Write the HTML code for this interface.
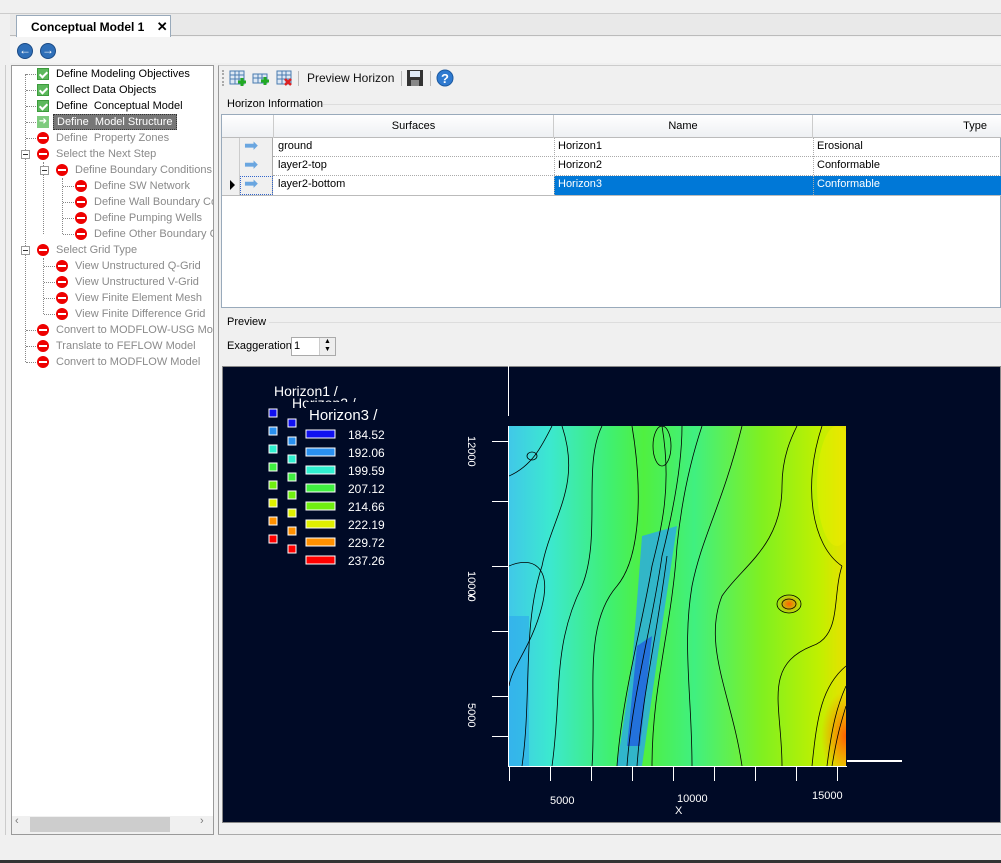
<!DOCTYPE html>
<html><head><style>
*{margin:0;padding:0;box-sizing:border-box}
body{width:1001px;height:863px;background:#f0f0f0;font-family:"Liberation Sans",sans-serif;font-size:11px;position:relative;overflow:hidden;color:#000}
.a{position:absolute}
.ti{position:absolute;height:16px;line-height:16px;white-space:nowrap}
.ck{position:absolute;width:12px;height:12px;background:#5cb85c;border:1px solid #3c9b3c}
.ck:after{content:"";position:absolute;left:3px;top:1px;width:3px;height:6px;border:solid #fff;border-width:0 2px 2px 0;transform:rotate(45deg)}
.st{position:absolute;width:12px;height:12px;border-radius:50%;background:#e00}
.st:after{content:"";position:absolute;left:2px;top:5px;width:8px;height:2px;background:#fff}
.g{color:#8a8a8a}
.dh{position:absolute;border-top:1px dotted #888;height:0}
.dv{position:absolute;border-left:1px dotted #888;width:0}
.pm{position:absolute;width:9px;height:9px;border:1px solid #999;background:#fff}
.pm:after{content:"";position:absolute;left:1px;top:3px;width:5px;height:1px;background:#333}
</style></head><body>
<div class="a" style="left:0;top:0;width:1001px;height:14px;background:#f0f0f0;border-bottom:1px solid #ccc"></div>
<div class="a" style="left:10px;top:14px;width:991px;height:22px;background:#e9e9e9;border-bottom:1px solid #bbb"></div>
<div class="a" style="left:16px;top:15px;width:155px;height:22px;background:#fff;border:1px solid #9ab;border-bottom:none;font-weight:bold;font-size:12px;line-height:21px;padding-left:14px">Conceptual Model 1 <span style="margin-left:9px;font-size:13px">✕</span></div>
<div class="a" style="left:10px;top:37px;width:991px;height:26px;background:#f4f4f4"></div>
<div class="a" style="left:17px;top:43px;width:16px;height:16px;border-radius:50%;background:#2f6fb8;border:1px solid #1a4a85;color:#fff;font-size:12px;line-height:13px;text-align:center;font-weight:bold">←</div>
<div class="a" style="left:40px;top:43px;width:16px;height:16px;border-radius:50%;background:#2f6fb8;border:1px solid #1a4a85;color:#fff;font-size:12px;line-height:13px;text-align:center;font-weight:bold">→</div>
<div class="a" style="left:11px;top:65px;width:203px;height:770px;background:#fff;border:1px solid #999;overflow:hidden">
<div class="dv" style="left:13px;top:8px;height:288px"></div>
<div class="dv" style="left:31px;top:96px;height:72px"></div>
<div class="dv" style="left:50px;top:112px;height:56px"></div>
<div class="dv" style="left:31px;top:192px;height:56px"></div>
<div class="ck" style="left:25px;top:2px"></div><div class="dh" style="left:14px;top:8px;width:10px"></div><div class="ti" style="left:44px;top:0px">Define Modeling Objectives</div>
<div class="ck" style="left:25px;top:18px"></div><div class="dh" style="left:14px;top:24px;width:10px"></div><div class="ti" style="left:44px;top:16px">Collect Data Objects</div>
<div class="ck" style="left:25px;top:34px"></div><div class="dh" style="left:14px;top:40px;width:10px"></div><div class="ti" style="left:44px;top:32px">Define&nbsp; Conceptual Model</div>
<div class="a" style="left:25px;top:50px;width:12px;height:12px;background:#7ecb7e;color:#fff;font-size:10px;line-height:12px;text-align:center">➜</div><div class="dh" style="left:14px;top:56px;width:10px"></div><div class="ti" style="left:41px;top:48px;background:#777;color:#fff;padding:0 3px;border:1px dotted #333;line-height:14px">Define&nbsp; Model Structure</div>
<div class="st" style="left:25px;top:66px"></div><div class="dh" style="left:14px;top:72px;width:10px"></div><div class="ti g" style="left:44px;top:64px">Define&nbsp; Property Zones</div>
<div class="pm" style="left:9px;top:84px"></div><div class="st" style="left:25px;top:82px"></div><div class="ti g" style="left:44px;top:80px">Select the Next Step</div>
<div class="pm" style="left:28px;top:100px"></div><div class="st" style="left:44px;top:98px"></div><div class="ti g" style="left:63px;top:96px">Define Boundary Conditions</div>
<div class="st" style="left:63px;top:114px"></div><div class="dh" style="left:51px;top:120px;width:11px"></div><div class="ti g" style="left:82px;top:112px">Define SW Network</div>
<div class="st" style="left:63px;top:130px"></div><div class="dh" style="left:51px;top:136px;width:11px"></div><div class="ti g" style="left:82px;top:128px">Define Wall Boundary Co</div>
<div class="st" style="left:63px;top:146px"></div><div class="dh" style="left:51px;top:152px;width:11px"></div><div class="ti g" style="left:82px;top:144px">Define Pumping Wells</div>
<div class="st" style="left:63px;top:162px"></div><div class="dh" style="left:51px;top:168px;width:11px"></div><div class="ti g" style="left:82px;top:160px">Define Other Boundary C</div>
<div class="pm" style="left:9px;top:180px"></div><div class="st" style="left:25px;top:178px"></div><div class="ti g" style="left:44px;top:176px">Select Grid Type</div>
<div class="st" style="left:44px;top:194px"></div><div class="dh" style="left:32px;top:200px;width:11px"></div><div class="ti g" style="left:63px;top:192px">View Unstructured Q-Grid</div>
<div class="st" style="left:44px;top:210px"></div><div class="dh" style="left:32px;top:216px;width:11px"></div><div class="ti g" style="left:63px;top:208px">View Unstructured V-Grid</div>
<div class="st" style="left:44px;top:226px"></div><div class="dh" style="left:32px;top:232px;width:11px"></div><div class="ti g" style="left:63px;top:224px">View Finite Element Mesh</div>
<div class="st" style="left:44px;top:242px"></div><div class="dh" style="left:32px;top:248px;width:11px"></div><div class="ti g" style="left:63px;top:240px">View Finite Difference Grid</div>
<div class="st" style="left:25px;top:258px"></div><div class="dh" style="left:14px;top:264px;width:10px"></div><div class="ti g" style="left:44px;top:256px">Convert to MODFLOW-USG Model</div>
<div class="st" style="left:25px;top:274px"></div><div class="dh" style="left:14px;top:280px;width:10px"></div><div class="ti g" style="left:44px;top:272px">Translate to FEFLOW Model</div>
<div class="st" style="left:25px;top:290px"></div><div class="dh" style="left:14px;top:296px;width:10px"></div><div class="ti g" style="left:44px;top:288px">Convert to MODFLOW Model</div>
</div>
<div class="a" style="left:0;top:65px;width:6px;height:770px;background:#f0f0f0;border-right:1px solid #ccc"></div>
<div class="a" style="left:12px;top:816px;width:201px;height:18px;background:#f0f0f0"></div>
<div class="a" style="left:30px;top:817px;width:140px;height:15px;background:#cdcdcd"></div>
<div class="a" style="left:15px;top:815px;color:#777">‹</div><div class="a" style="left:200px;top:815px;color:#777">›</div>
<div class="a" style="left:218px;top:65px;width:783px;height:770px;background:#f0f0f0;border-left:1px solid #999;border-top:1px solid #ccc"></div>
<div class="a" style="left:222px;top:70px;width:3px;height:16px;border-left:2px dotted #aaa"></div>
<svg class="a" style="left:229px;top:69px" width="230" height="20">
<g fill="#dde8f4" stroke="#4a7cb0"><rect x="1" y="2" width="14" height="13"/><rect x="24" y="5" width="14" height="9"/><rect x="48" y="2" width="14" height="13"/></g>
<g stroke="#4a7cb0"><path d="M1 6H15M1 10H15M6 2V15M10 2V15M24 9H38M29 5V14M33 5V14M48 6H62M48 10H62M53 2V15M57 2V15"/></g>
<path d="M13 9v8M9 13h8M36 8v8M32 12h8" stroke="#2a2" stroke-width="3"/>
<path d="M56 10l6 6M62 10l-6 6" stroke="#d22" stroke-width="2.5"/>
<rect x="69" y="2" width="1" height="15" fill="#bbb"/><rect x="172" y="2" width="1" height="15" fill="#bbb"/><rect x="201" y="2" width="1" height="15" fill="#bbb"/>
<rect x="178" y="1" width="16" height="16" fill="#333"/><rect x="181" y="2" width="10" height="6" fill="#dfe9f5"/><rect x="182" y="11" width="8" height="6" fill="#888"/>
<circle cx="216" cy="9" r="8" fill="#2f7ad0" stroke="#1c5aa0"/><text x="212" y="14" fill="#fff" font-size="13" font-weight="bold" font-family="Liberation Sans">?</text>
</svg>
<div class="a" style="left:307px;top:70px;line-height:16px;color:#111;font-size:12px">Preview Horizon</div>
<div class="a" style="left:227px;top:98px">Horizon Information</div>
<div class="a" style="left:323px;top:104px;width:678px;border-top:1px solid #ddd"></div>
<div class="a" style="left:221px;top:114px;width:780px;height:194px;background:#fff;border:1px solid #9ab"></div>
<div class="a" style="left:222px;top:115px;width:779px;height:23px;background:linear-gradient(#fff,#eef0f3);border-bottom:1px solid #bbb"></div>
<div class="a" style="left:273px;top:115px;width:281px;height:23px;line-height:23px;text-align:center;border-left:1px solid #ccc;border-right:1px solid #ccc">Surfaces</div>
<div class="a" style="left:554px;top:115px;width:259px;height:23px;line-height:23px;text-align:center;border-right:1px solid #ccc">Name</div>
<div class="a" style="left:813px;top:115px;width:188px;height:23px;line-height:23px;text-align:right;padding-right:14px">Type</div>
<div class="a" style="left:554px;top:176px;width:447px;height:19px;background:#0078d7"></div>
<div class="a" style="left:222px;top:138px;width:18px;height:57px;background:#f0f0f0;border-right:1px solid #ccc"></div>
<div class="a" style="left:230px;top:180px;width:0;height:0;border:5px solid transparent;border-left:5px solid #000;border-right:none"></div>
<div class="a" style="left:240px;top:138px;width:33px;height:57px;background:#f0f0f0;border-right:1px solid #aaa"></div>
<div class="a" style="left:240px;top:176px;width:33px;height:19px;border:1px dotted #36c"></div>
<div class="a" style="left:244px;top:136px;color:#6aa6e0;font-size:17px;line-height:19px">➡</div>
<div class="a" style="left:244px;top:155px;color:#6aa6e0;font-size:17px;line-height:19px">➡</div>
<div class="a" style="left:244px;top:174px;color:#6aa6e0;font-size:17px;line-height:19px">➡</div>
<div class="a" style="left:273px;top:156px;width:728px;border-top:1px dotted #aaa"></div>
<div class="a" style="left:273px;top:175px;width:728px;border-top:1px dotted #aaa"></div>
<div class="a" style="left:222px;top:195px;width:779px;border-top:1px solid #bbb"></div>
<div class="a" style="left:554px;top:138px;height:57px;border-left:1px dotted #aaa"></div>
<div class="a" style="left:813px;top:138px;height:57px;border-left:1px dotted #aaa"></div>
<div class="ti" style="left:278px;top:138px">ground</div><div class="ti" style="left:558px;top:138px">Horizon1</div><div class="ti" style="left:817px;top:138px">Erosional</div>
<div class="ti" style="left:278px;top:157px">layer2-top</div><div class="ti" style="left:558px;top:157px">Horizon2</div><div class="ti" style="left:817px;top:157px">Conformable</div>
<div class="ti" style="left:278px;top:176px">layer2-bottom</div><div class="ti" style="left:558px;top:176px;color:#fff">Horizon3</div><div class="ti" style="left:817px;top:176px;color:#fff">Conformable</div>
<div class="a" style="left:227px;top:316px">Preview</div>
<div class="a" style="left:269px;top:322px;width:732px;border-top:1px solid #ddd"></div>
<div class="a" style="left:227px;top:340px">Exaggeration</div>
<div class="a" style="left:291px;top:337px;width:45px;height:19px;background:#fff;border:1px solid #aaa;padding-left:2px;line-height:17px">1</div>
<div class="a" style="left:319px;top:338px;width:16px;height:17px;background:#eee;border-left:1px solid #ccc;font-size:7px;line-height:8px;text-align:center">▲<br>▼</div>
<div class="a" style="left:222px;top:366px;width:779px;height:457px;background:#000a26;border:1px solid #888"></div>
<svg class="a" style="left:222px;top:366px" width="779" height="457" font-family="Liberation Sans">
<defs>
<linearGradient id="h" x1="0" x2="1"><stop offset="0" stop-color="#40c8e8"/><stop offset=".12" stop-color="#3ce8d0"/><stop offset=".3" stop-color="#40f070"/><stop offset=".4" stop-color="#50f040"/><stop offset=".55" stop-color="#40f080"/><stop offset=".75" stop-color="#80f020"/><stop offset=".92" stop-color="#c0f000"/><stop offset="1" stop-color="#e8e000"/></linearGradient>
<radialGradient id="o"><stop offset="0" stop-color="#ff6000"/><stop offset="1" stop-color="#ff8000" stop-opacity="0"/></radialGradient>
<clipPath id="c"><rect x="287" y="60" width="337" height="340"/></clipPath>
</defs>
<g clip-path="url(#c)">
<rect x="287" y="60" width="337" height="340" fill="url(#h)"/>
<path d="M420 170 L455 160 L440 260 L420 400 L395 400 L410 300Z" fill="#2aa8e8" opacity=".8"/>
<path d="M415 280 L430 270 L418 380 L405 380Z" fill="#2060e0" opacity=".8"/>
<rect x="287" y="250" width="20" height="150" fill="#2aa0f0" opacity=".5"/>
<ellipse cx="624" cy="370" rx="25" ry="45" fill="url(#o)"/>
<ellipse cx="567" cy="238" rx="12" ry="10" fill="url(#o)"/>
<ellipse cx="615" cy="120" rx="20" ry="60" fill="#f0f000" opacity=".4"/>
<g fill="none" stroke="#000" stroke-width=".8">
<path d="M287 110 C310 100 320 80 330 60 M300 400 C310 330 300 260 320 200 C330 150 360 120 340 60"/>
<path d="M330 400 C340 330 330 280 360 220 C380 170 360 100 380 60"/>
<path d="M370 400 C375 330 360 260 395 220 C420 190 420 120 410 60"/>
<path d="M395 400 C400 330 420 260 430 200 C440 160 450 120 440 60"/>
<path d="M405 400 C410 330 430 260 440 190 C450 150 460 100 460 60"/>
<path d="M415 400 C420 330 435 270 445 190"/>
<path d="M430 400 C430 320 450 260 455 180 C460 130 470 90 480 60"/>
<path d="M470 400 C470 330 460 280 470 220 C480 170 500 140 520 60"/>
<path d="M520 400 C510 330 480 280 500 230 C520 200 560 180 560 120 C560 90 570 70 575 60"/>
<path d="M560 400 C560 340 540 300 590 280 C620 270 610 230 620 200"/>
<path d="M590 400 C595 350 600 320 624 300"/>
<path d="M605 400 C610 360 615 340 624 320"/>
<path d="M610 400 C615 370 618 360 624 340"/>
<path d="M600 60 C580 120 590 180 620 200"/>
<ellipse cx="567" cy="238" rx="12" ry="9"/><ellipse cx="567" cy="238" rx="7" ry="5"/>
<ellipse cx="440" cy="80" rx="9" ry="20"/><ellipse cx="310" cy="90" rx="5" ry="4"/>
<path d="M287 200 C310 190 330 200 320 240 C310 280 290 300 287 320"/>
</g>
</g>
<g fill="#fff"><rect x="286" y="60" width="1" height="341"/><rect x="287" y="400" width="338" height="1"/>
<rect x="286" y="0" width="1" height="50"/>
<path d="M287 401h1v14h-1zM328 401h1v14h-1zM369 401h1v14h-1zM410 401h1v14h-1zM451 401h1v14h-1zM492 401h1v14h-1zM533 401h1v14h-1zM574 401h1v14h-1zM615 401h1v14h-1z"/>
<path d="M270 75h16v1h-16zM270 135h16v1h-16zM270 200h16v1h-16zM270 265h16v1h-16zM270 330h16v1h-16zM270 370h16v1h-16z"/>
<rect x="625" y="394" width="55" height="2"/>
</g>
<g fill="#fff" font-size="11">
<text x="328" y="438">5000</text><text x="455" y="436">10000</text><text x="590" y="433">15000</text><text x="453" y="448">X</text>
<text transform="translate(246,70) rotate(90)">12000</text><text transform="translate(246,205) rotate(90)">10000</text><text transform="translate(246,337) rotate(90)">5000</text><text transform="translate(246,226) rotate(90)">Y</text>
</g>
<g font-size="14" fill="#fff"><text x="52" y="30">Horizon1 /</text><text x="70" y="42">Horizon2 /</text></g>
<rect x="84" y="36" width="120" height="180" fill="#000a26"/>
<g stroke="#fff" stroke-width="1">
<rect x="47" y="43" width="8" height="8" fill="#1010f0"/><rect x="47" y="61" width="8" height="8" fill="#2a90f0"/><rect x="47" y="79" width="8" height="8" fill="#30f0d0"/><rect x="47" y="97" width="8" height="8" fill="#40f040"/><rect x="47" y="115" width="8" height="8" fill="#70f010"/><rect x="47" y="133" width="8" height="8" fill="#e0f000"/><rect x="47" y="151" width="8" height="8" fill="#ff9000"/><rect x="47" y="169" width="8" height="8" fill="#f00"/>
<rect x="66" y="53" width="8" height="8" fill="#1010f0"/><rect x="66" y="71" width="8" height="8" fill="#2a90f0"/><rect x="66" y="89" width="8" height="8" fill="#30f0d0"/><rect x="66" y="107" width="8" height="8" fill="#40f040"/><rect x="66" y="125" width="8" height="8" fill="#70f010"/><rect x="66" y="143" width="8" height="8" fill="#e0f000"/><rect x="66" y="161" width="8" height="8" fill="#ff9000"/><rect x="66" y="179" width="8" height="8" fill="#f00"/>
<rect x="84" y="64" width="29" height="8" fill="#1010f0"/><rect x="84" y="82" width="29" height="8" fill="#2a90f0"/><rect x="84" y="100" width="29" height="8" fill="#30f0d0"/><rect x="84" y="118" width="29" height="8" fill="#40f040"/><rect x="84" y="136" width="29" height="8" fill="#70f010"/><rect x="84" y="154" width="29" height="8" fill="#e0f000"/><rect x="84" y="172" width="29" height="8" fill="#ff9000"/><rect x="84" y="190" width="29" height="8" fill="#f00"/>
</g>
<g fill="#fff" font-size="12"><text x="87" y="54" font-size="15">Horizon3 /</text>
<text x="126" y="73">184.52</text><text x="126" y="91">192.06</text><text x="126" y="109">199.59</text><text x="126" y="127">207.12</text><text x="126" y="145">214.66</text><text x="126" y="163">222.19</text><text x="126" y="181">229.72</text><text x="126" y="199">237.26</text></g>
</svg>
<div class="a" style="left:218px;top:834px;width:783px;border-top:1px solid #aaa"></div>
<div class="a" style="left:0;top:860px;width:1001px;height:3px;background:#333"></div>
</body></html>
